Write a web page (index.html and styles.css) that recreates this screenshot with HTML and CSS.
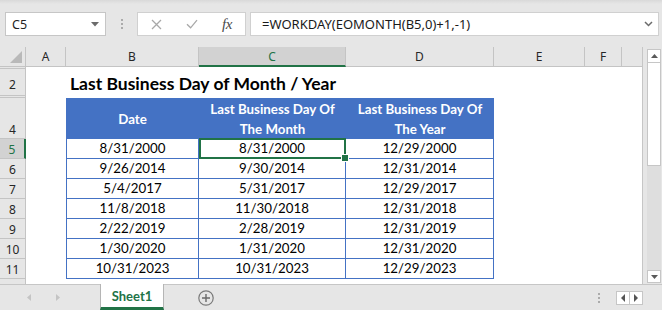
FILE: index.html
```html
<!DOCTYPE html>
<html>
<head>
<meta charset="utf-8">
<link rel="stylesheet" href="styles.css">
</head>
<body>
<div class="app">
  <div class="fbar">
    <div class="namebox">
      <span>C5</span>
      <svg class="nb-arrow" width="8" height="5" viewBox="0 0 8 5"><path d="M0 0h8L4 4.5z" fill="#6b6b6b"/></svg>
    </div>
    <div class="grip"><i></i><i></i><i></i></div>
    <div class="fbtns">
      <span class="slot s1"><svg width="11" height="11" viewBox="0 0 11 11"><path d="M1 1l9 9M10 1l-9 9" stroke="#a8a8a8" stroke-width="1.3"/></svg></span>
      <span class="slot s2"><svg width="12" height="10" viewBox="0 0 12 10"><path d="M1 5.2l3.6 3.6L11 1.2" fill="none" stroke="#a8a8a8" stroke-width="1.3"/></svg></span>
      <span class="slot s3 fx">fx</span>
    </div>
    <div class="finput">
      <span>=WORKDAY(EOMONTH(B5,0)+1,-1)</span>
      <svg width="9" height="6" viewBox="0 0 9 6"><path d="M1 1l3.5 3.5L8 1" fill="none" stroke="#6b6b6b" stroke-width="1.5"/></svg>
    </div>
  </div>

  <div class="main">
    <div class="sheet">
      <div class="row colheads">
        <div class="corner"><svg width="12" height="12" viewBox="0 0 12 12"><path d="M12 0V12H0z" fill="#b9b9b9"/></svg></div>
        <div class="ch">A</div>
        <div class="ch">B</div>
        <div class="ch sel">C</div>
        <div class="ch">D</div>
        <div class="ch">E</div>
        <div class="ch">F</div>
        <div class="ch"></div>
      </div>
      <div class="row r1"><div class="rh"></div></div>
      <div class="row r2"><div class="rh">2</div><div class="title">Last Business Day of Month / Year</div></div>
      <div class="row r3"><div class="rh"></div></div>
      <div class="row r4">
        <div class="rh">4</div><div></div>
        <div class="th first">Date</div>
        <div class="th">Last Business Day Of<br>The Month</div>
        <div class="th">Last Business Day Of<br>The Year</div>
      </div>
      <div class="row rd"><div class="rh rsel">5</div><div></div><div class="td first">8/31/2000</div><div class="td active">8/31/2000</div><div class="td">12/29/2000</div></div>
      <div class="row rd"><div class="rh">6</div><div></div><div class="td first">9/26/2014</div><div class="td">9/30/2014</div><div class="td">12/31/2014</div></div>
      <div class="row rd"><div class="rh">7</div><div></div><div class="td first">5/4/2017</div><div class="td">5/31/2017</div><div class="td">12/29/2017</div></div>
      <div class="row rd"><div class="rh">8</div><div></div><div class="td first">11/8/2018</div><div class="td">11/30/2018</div><div class="td">12/31/2018</div></div>
      <div class="row rd"><div class="rh">9</div><div></div><div class="td first">2/22/2019</div><div class="td">2/28/2019</div><div class="td">12/31/2019</div></div>
      <div class="row rd"><div class="rh">10</div><div></div><div class="td first">1/30/2020</div><div class="td">1/31/2020</div><div class="td">12/31/2020</div></div>
      <div class="row rd"><div class="rh">11</div><div></div><div class="td first">10/31/2023</div><div class="td">10/31/2023</div><div class="td">12/29/2023</div></div>
      <div class="row r12"><div class="rh"></div></div>
    </div>
    <div class="vscroll">
      <div class="vs-btn"><svg width="7" height="4" viewBox="0 0 7 4"><path d="M0 4h7L3.5 0z" fill="#5a5a5a"/></svg></div>
      <div class="vs-thumb"></div>
      <div class="vs-track"></div>
      <div class="vs-btn down"><svg width="7" height="4" viewBox="0 0 7 4"><path d="M0 0h7L3.5 4z" fill="#5a5a5a"/></svg></div>
    </div>
  </div>

  <div class="tabs">
    <div class="tabnav">
      <svg class="nav-l" width="4" height="7" viewBox="0 0 4 7"><path d="M4 0v7L0 3.5z" fill="#c4c4c4"/></svg>
      <svg class="nav-r" width="4" height="7" viewBox="0 0 4 7"><path d="M0 0v7l4-3.5z" fill="#c4c4c4"/></svg>
    </div>
    <div class="tab">Sheet1</div>
    <div class="addsheet">
      <svg width="16" height="16" viewBox="0 0 16 16"><circle cx="8" cy="8" r="7.2" fill="none" stroke="#7a7a7a" stroke-width="1.2"/><path d="M8 4v8M4 8h8" stroke="#6a6a6a" stroke-width="1.4"/></svg>
    </div>
    <div class="spacer"></div>
    <div class="grip hgrip"><i></i><i></i><i></i></div>
    <div class="hscroll">
      <span class="hs-btn"><svg width="4" height="8" viewBox="0 0 4 8"><path d="M4 0v8L0 4z" fill="#555"/></svg></span>
      <span class="hs-btn"><svg width="4" height="8" viewBox="0 0 4 8"><path d="M0 0v8l4-4z" fill="#555"/></svg></span>
    </div>
  </div>
</div>
</body>
</html>
```

FILE: styles.css
```css
* { box-sizing: border-box; }

body {
  margin: 0;
  width: 662px;
  height: 310px;
  overflow: hidden;
  background: #e6e6e6;
  font-family: "Noto Sans", "Open Sans", sans-serif;
  color: #222;
}

.app { width: 662px; height: 310px; }

/* formula bar */
.fbar {
  height: 47px;
  display: flex;
  align-items: flex-start;
  padding: 12px 0 0 5px;
  background: linear-gradient(#d9d9d9, #e6e6e6 4px);
}

.namebox {
  width: 101px;
  height: 24px;
  background: #fff;
  border: 1px solid #c6c6c6;
  display: flex;
  align-items: center;
  justify-content: space-between;
  padding: 0 6px 0 6px;
  font-size: 12.5px;
}

.grip {
  width: 31px;
  height: 24px;
  display: flex;
  flex-direction: column;
  align-items: center;
  justify-content: center;
  gap: 2px;
}
.grip i { display: block; width: 2px; height: 2px; background: #ababab; }

.fbtns {
  width: 109px;
  height: 24px;
  background: #fff;
  border: 1px solid #d0d0d0;
  display: flex;
  align-items: center;
}
.slot { display: flex; justify-content: center; align-items: center; height: 22px; }
.s1 { width: 37px; }
.s2 { width: 34px; }
.s3 { width: 36px; }
.fx {
  font-family: "Liberation Serif", serif;
  font-style: italic;
  font-size: 15px;
  color: #4a4a4a;
  letter-spacing: -0.5px;
}

.finput {
  margin-left: 4px;
  width: 409px;
  height: 24px;
  background: #fff;
  border: 1px solid #d0d0d0;
  display: flex;
  align-items: center;
  justify-content: space-between;
  padding: 0 5px 0 11px;
  font-size: 13px;
  color: #1a1a1a;
}

/* sheet */
.main { display: flex; height: 237px; }

.sheet {
  width: 643px;
  background: #fff;
  border-right: 1px solid #c6c6c6;
  display: flex;
  flex-direction: column;
}

.row {
  display: grid;
  grid-template-columns: 26px 40px 133px 147px 148px 91px 37px 20px;
}

.colheads { height: 20px; }
.corner, .ch {
  background: #e6e6e6;
  border-right: 1px solid #c4c4c4;
  border-bottom: 1px solid #c4c4c4;
}
.corner {
  display: flex;
  justify-content: flex-end;
  align-items: flex-end;
  padding: 0 3px 3px 0;
}
.ch {
  display: flex;
  justify-content: center;
  align-items: center;
  font-size: 12px;
  color: #262626;
}
.ch:last-child { border-right: none; }
.ch.sel {
  background: #d2d2d2;
  color: #217346;
  border-bottom: 2px solid #217346;
}

.rh {
  background: #e6e6e6;
  border-right: 1px solid #c4c4c4;
  border-bottom: 1px solid #c4c4c4;
  display: flex;
  justify-content: center;
  align-items: flex-end;
  font-size: 12px;
  line-height: 17px;
  color: #262626;
}
.rh.rsel {
  background: #d2d2d2;
  color: #217346;
  border-right: 2px solid #217346;
}

.r1 { height: 2px; }
.r2 { height: 27px; }
.r2 .rh { padding-bottom: 2px; }
.r3 { height: 2px; }
.r4 { height: 41px; }
.rd { height: 20px; }
.r12 { flex: 1; }
.r12 .rh { border-bottom: none; }

.title {
  grid-column: 3 / -1;
  font-family: "Lato", "Noto Sans", sans-serif;
  font-weight: bold;
  font-size: 17.5px;
  color: #000;
  padding-left: 4px;
  display: flex;
  align-items: flex-end;
  padding-bottom: 2px;
}

.th {
  background: #4472c4;
  color: #fff;
  font-family: "Lato", "Noto Sans", sans-serif;
  font-weight: bold;
  font-size: 13.3px;
  line-height: 20px;
  text-align: center;
  display: flex;
  align-items: center;
  justify-content: center;
  padding-top: 1px;
}

.td {
  font-family: "Lato", "Noto Sans", sans-serif;
  font-size: 13.3px;
  color: #000;
  text-align: center;
  line-height: 19px;
  border-right: 1px solid #4472c4;
  border-bottom: 1px solid #4472c4;
}
.td.first { border-left: 1px solid #4472c4; }

.td.active { position: relative; }
.td.active::after {
  content: "";
  position: absolute;
  top: -1px;
  left: 0;
  right: -1px;
  bottom: -1px;
  border: 2px solid #217346;
}
.td.active::before {
  content: "";
  position: absolute;
  right: -4px;
  bottom: -4px;
  width: 6px;
  height: 6px;
  background: #217346;
  border: 1px solid #fff;
  z-index: 1;
}

/* vertical scrollbar */
.vscroll {
  width: 19px;
  display: flex;
  flex-direction: column;
  padding: 2px 1px 1px 4px;
}
.vs-btn {
  height: 14px;
  background: #fff;
  border: 1px solid #c6c6c6;
  display: flex;
  align-items: center;
  justify-content: center;
}
.vs-btn.down { height: 13px; }
.vs-thumb {
  height: 103px;
  background: #fff;
  border: 1px solid #c6c6c6;
  border-top: none;
}
.vs-track { flex: 1; background: #dedede; }

/* sheet tabs */
.tabs {
  height: 26px;
  border-top: 1px solid #c6c6c6;
  display: flex;
  align-items: center;
}
.tabnav {
  width: 100px;
  display: flex;
  align-items: center;
  padding-left: 27px;
}
.nav-r { margin-left: 25px; }
.tab {
  width: 64px;
  height: 26px;
  margin-top: -1px;
  align-self: flex-start;
  background: #fff;
  border-left: 1px solid #b5b5b5;
  border-right: 1px solid #b5b5b5;
  border-bottom: 3px solid #217346;
  display: flex;
  align-items: center;
  justify-content: center;
  font-family: "Lato", "Noto Sans", sans-serif;
  font-weight: bold;
  font-size: 13px;
  color: #217346;
  padding-top: 1px;
}
.addsheet {
  margin-left: 34px;
  display: flex;
  align-items: center;
  padding-top: 1px;
}
.spacer { flex: 1; }
.hgrip { width: 4px; height: 12px; margin-right: 15px; }
.hscroll {
  width: 27px;
  height: 14px;
  margin-right: 19px;
  display: flex;
  background: #fff;
  border: 1px solid #c6c6c6;
}
.hs-btn {
  flex: 1;
  display: flex;
  align-items: center;
  justify-content: center;
}
.hs-btn + .hs-btn { border-left: 1px solid #c6c6c6; }
```
